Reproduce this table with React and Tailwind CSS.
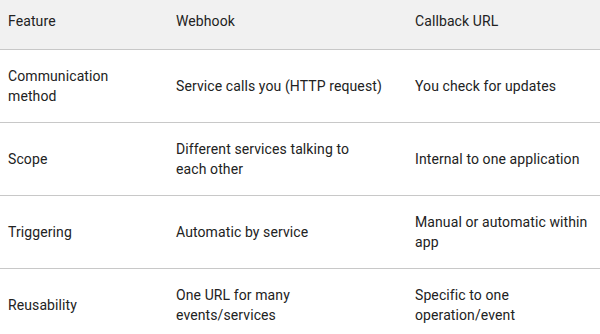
import React from 'react';

// each cell is a list of lines, wrapped the way the screenshot wraps them
const rows = [
  [['Communication', 'method'], ['Service calls you (HTTP request)'], ['You check for updates']],
  [['Scope'], ['Different services talking to', 'each other'], ['Internal to one application']],
  [['Triggering'], ['Automatic by service'], ['Manual or automatic within', 'app']],
  [['Reusability'], ['One URL for many', 'events/services'], ['Specific to one', 'operation/event']],
];

const cols = 'grid grid-cols-[168px_239px_193px]';

function App() {
  return (
    <div
      className="w-[600px] h-[334px] overflow-hidden bg-white text-[14px] leading-[20px] tracking-[0.1px] text-[#222222]"
      style={{ fontFamily: 'Roboto, "Noto Sans", sans-serif' }}
    >
      {/* header */}
      <div className={`${cols} h-[49px] bg-[#f1f1f1] border-b border-[#c8c8c8] box-content`}>
        <div className="pl-2 pt-[11px]">Feature</div>
        <div className="pl-2 pt-[11px]">Webhook</div>
        <div className="pl-2 pt-[11px]">Callback URL</div>
      </div>

      {rows.map((r, i) => (
        <div key={i} className={`${cols} h-[72px] border-b border-[#c8c8c8] box-content`}>
          {r.map((lines, j) => (
            <div key={j} className="pl-2 flex flex-col justify-center whitespace-nowrap">
              {lines.map((l, k) => (
                <span key={k}>{l}</span>
              ))}
            </div>
          ))}
        </div>
      ))}
    </div>
  );
}

export default App;
